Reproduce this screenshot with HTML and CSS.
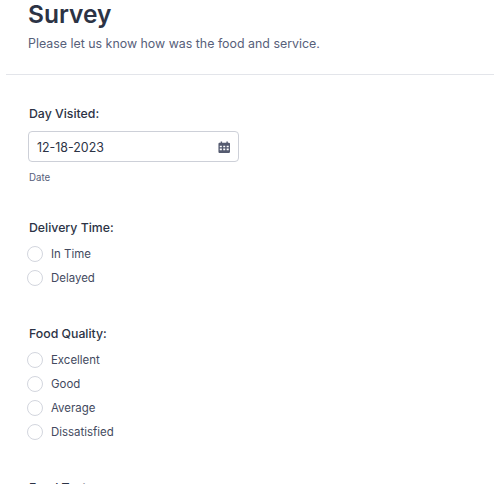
FILE: index.html
```html
<!DOCTYPE html>
<html lang="en">
<head>
    <meta charset="UTF-8">
    <title>Survey</title>
    <link rel="stylesheet" href="styles.css">
</head>
<body>
    <div class="form">
        <div class="header">
            <h1>Survey</h1>
            <p>Please let us know how was the food and service.</p>
        </div>

        <div class="field">
            <div class="label">Day Visited:</div>
            <div class="date-input">
                <span>12-18-2023</span>
                <svg class="cal-icon" width="12.500" height="12.500" viewBox="0 0 14 14">
                    <path fill="#555b70" d="M3 0.5h1.600v1.500h4.800V0.5H11V2h1.200c.7 0 1.300.6 1.300 1.300V12c0 .8-.6 1.400-1.300 1.400H1.800C1.100 13.400.5 12.800.5 12V3.300C.5 2.600 1.100 2 1.800 2H3z"/>
                    <path fill="#fff" d="M2 5.300h2.300v1.800H2zM5.900 5.300h2.200v1.800H5.900zM9.700 5.300H12v1.800H9.700zM2 8.500h2.300v1.800H2zM5.900 8.500h2.200v1.800H5.900zM9.700 8.500H12v1.800H9.700z"/>
                </svg>
            </div>
            <div class="hint">Date</div>
        </div>

        <div class="field">
            <div class="label">Delivery Time:</div>
            <div class="options">
                <div class="option"><span class="radio"></span>In Time</div>
                <div class="option"><span class="radio"></span>Delayed</div>
            </div>
        </div>

        <div class="field">
            <div class="label">Food Quality:</div>
            <div class="options">
                <div class="option"><span class="radio"></span>Excellent</div>
                <div class="option"><span class="radio"></span>Good</div>
                <div class="option"><span class="radio"></span>Average</div>
                <div class="option"><span class="radio"></span>Dissatisfied</div>
            </div>
        </div>

        <div class="field">
            <div class="label">Food Taste:</div>
        </div>
    </div>
</body>
</html>
```

FILE: styles.css
```css
html, body {
    height: 100%;
    overflow: hidden;
}

body {
    margin: 0;
    background-color: #fff;
    font-family: 'Inter', sans-serif;
    color: #2c3345;
}

.form {
    margin-top: -3px;
    padding: 0 6px;
}

.header {
    padding: 0 22px 20px;
    border-bottom: 1px solid #e3e5ea;
}

h1 {
    margin: 0;
    font-size: 24.5px;
    line-height: 34px;
    font-weight: 600;
}

.header p {
    margin: 3px 0 0;
    font-size: 12.4px;
    line-height: 20px;
    color: #57607a;
}

.field {
    padding: 0 22px;
    margin-top: 29px;
}

.label {
    padding-left: 1px;
    font-size: 12.3px;
    line-height: 20px;
    font-weight: 450;
    margin-bottom: 6px;
}

.date-input {
    display: flex;
    align-items: center;
    justify-content: space-between;
    box-sizing: border-box;
    width: 211px;
    height: 31px;
    margin-top: 7px;
    padding: 1px 8px 0;
    border: 1px solid #cdd0d8;
    border-radius: 4px;
    font-size: 12.4px;
    color: #2c3345;
}

.hint {
    margin-top: 9px;
    padding: 0 0 4px 1px;
    font-size: 9.7px;
    line-height: 14px;
    color: #57607a;
}

.options {
    display: flex;
    flex-direction: column;
    gap: 4px;
    padding-bottom: 7px;
}

.option {
    display: flex;
    align-items: center;
    gap: 8px;
    height: 20px;
    font-size: 11.45px;
    color: #434a60;
}

.radio {
    box-sizing: border-box;
    width: 16px;
    height: 16px;
    margin-left: -1px;
    border: 1.5px solid #d3d6de;
    border-radius: 50%;
}
```
